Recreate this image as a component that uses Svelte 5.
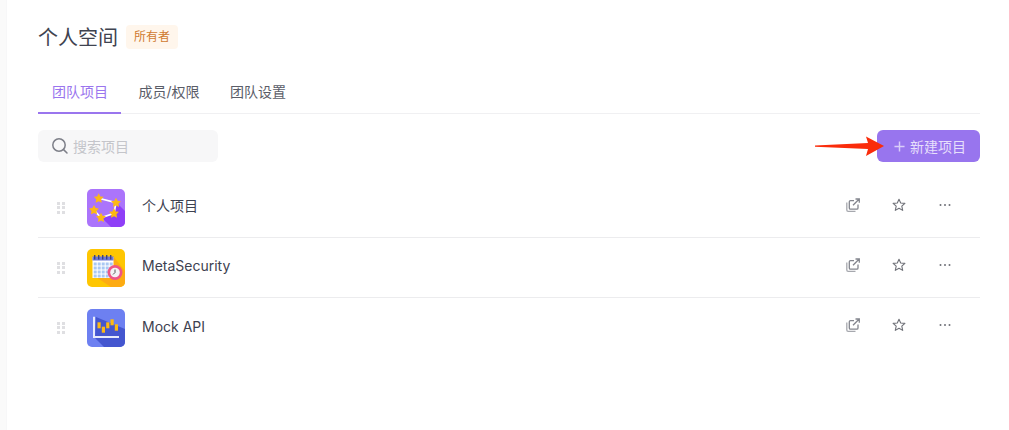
<script lang="ts">
  const tabs = ['团队项目', '成员/权限', '团队设置'];
  const projects = [
    { name: '个人项目', icon: 'star' },
    { name: 'MetaSecurity', icon: 'calendar' },
    { name: 'Mock API', icon: 'chart' }
  ];
  const starPoints = [
    [11.7, 9.3],
    [29, 13.7],
    [7, 21],
    [14, 28.7],
    [27, 24.3]
  ];
  const star = 'M0-3.4 1.100-1.300 3.400-1 1.700.7 2.100 3 0 2-2.100 3-1.700.7-3.400-1-1.100-1.300Z';
  const bars = [
    [10.5, 13.300, 6],
    [14.8, 17.700, 6],
    [19.200, 13.300, 6],
    [23.500, 10.300, 6],
    [27.800, 15.300, 6.400]
  ];
</script>

<div class="page">
  <main class="content">
    <header class="title-row">
      <h1>个人空间</h1>
      <span class="role">所有者</span>
    </header>

    <nav class="tabs">
      {#each tabs as tab, i}
        <button class="tab" class:active={i === 0}>{tab}</button>
      {/each}
    </nav>

    <div class="toolbar">
      <label class="search">
        <svg width="18" height="18" viewBox="0 0 18 18" fill="none" stroke="#7d7f88" stroke-width="1.5">
          <circle cx="8" cy="8" r="6.2" />
          <path d="M12.6 12.6 16 16" stroke-linecap="round" />
        </svg>
        <input placeholder="搜索项目" />
      </label>

      <div class="create-wrap">
        <button class="create">
          <svg width="11" height="11" viewBox="0 0 12 12" stroke="#d9cdf9" stroke-width="1.6">
            <path d="M6 .5v11M.5 6h11" />
          </svg>
          新建项目
        </button>
        <svg class="arrow" width="72" height="26" viewBox="0 0 72 26">
          <path d="M1 12.500 54 10 52 3.500 70 13 52 23 54 16 1 13.800Z" fill="#fa2c0b" />
        </svg>
      </div>
    </div>

    <ul class="list">
      {#each projects as project}
        <li class="row">
          <span class="grip">
            {#each Array(6) as _}<i></i>{/each}
          </span>

          <svg class="logo" width="38" height="38" viewBox="0 0 38 38">
            {#if project.icon === 'star'}
              <rect width="38" height="38" rx="5" fill="#ab74fb" />
              <path d="M29 13 27 25 14 28 24 38H33a5 5 0 0 0 5-5V22Z" fill="#8f3ff7" />
              <path d="M11.700 9.300 29 13.700 27 24.300 14 28.700 7 21" fill="none" stroke="#fff" stroke-width="1.700" />
              {#each starPoints as p}
                <path d={star} transform="translate({p[0]} {p[1]}) scale(1.450)" fill="#fdb913" />
              {/each}
            {:else if project.icon === 'calendar'}
              <rect width="38" height="38" rx="5" fill="#fec602" />
              <path d="M26 7 38 22V33a5 5 0 0 1-5 5H24L6 26Z" fill="#fdab12" />
              <rect x="5.500" y="8" width="21" height="21" fill="#fff" />
              <rect x="5.500" y="7.500" width="21" height="4" fill="#6d78d8" />
              {#each [7.500, 11.500, 15.500, 19.500, 23.500] as x}
                <rect x={x - 0.5} y="6" width="1.400" height="4.500" fill="#3c437f" />
                {#each [13.500, 17.500, 21.500, 25.500] as y}
                  <rect x={x - 0.8} {y} width="3" height="3" fill="#a9c8f4" />
                {/each}
              {/each}
              <circle cx="28" cy="23.500" r="7.500" fill="#ee5586" />
              <circle cx="28" cy="23.500" r="4.800" fill="#f3f3f5" />
              <path d="M28 23.500V20.500M28 23.500 26 25.500" stroke="#555" stroke-width="1" fill="none" />
            {:else}
              <rect width="38" height="38" rx="5" fill="#6d80f1" />
              <path d="M9 8 38 20V33a5 5 0 0 1-5 5H17L8 29Z" fill="#4456cf" />
              <path d="M7 7.700V28H32" fill="none" stroke="#e6eafb" stroke-width="2" />
              {#each bars as b}
                <rect x={b[0]} y={b[1]} width="3.200" height={b[2]} fill="#fdb913" />
              {/each}
            {/if}
          </svg>

          <span class="name">{project.name}</span>

          <div class="actions">
            <svg width="14" height="14" viewBox="0 0 14 14" fill="none" stroke="#84868e" stroke-width="1.300">
              <path d="M.8 4.500V12a1.300 1.300 0 0 0 1.300 1.300H9.500" stroke="#a6a8ae" />
              <path d="M8 2.600H4.500A1.200 1.200 0 0 0 3.300 3.800V10A1.200 1.200 0 0 0 4.500 11.200H10.800A1.200 1.200 0 0 0 12 10V6.500M7 7.300 13 1.300M9.500 1H13.300V4.800" />
            </svg>
            <svg width="14" height="14" viewBox="0 0 14 14" fill="none" stroke="#6f7178" stroke-width="1.100">
              <path d="M7 1.200 8.700 5 12.900 5.400 9.800 8.200 10.700 12.400 7 10.200 3.300 12.400 4.200 8.200 1.100 5.400 5.300 5Z" stroke-linejoin="round" />
            </svg>
            <svg class="more" width="12" height="4" viewBox="0 0 12 4" fill="#6f7178">
              <circle cx="1.500" cy="2" r="1" /><circle cx="6" cy="2" r="1" /><circle cx="10.500" cy="2" r="1" />
            </svg>
          </div>
        </li>
      {/each}
    </ul>
  </main>
</div>

<style>
  :global(body) {
    margin: 0;
    background: #fff;
  }

  .page {
    height: 430px;
    box-sizing: border-box;
    margin-left: 6px;
    border-left: 1px solid #f7f7f8;
    box-shadow: -6px 0 0 #fafafa;
    padding: 0 29px 0 31px;
    font-family: Inter, "Noto Sans CJK SC", "Liberation Sans", sans-serif;
    color: #3d4150;
  }

  .title-row {
    display: flex;
    align-items: center;
    gap: 8px;
    height: 72px;
    padding-top: 1px;
  }

  h1 {
    margin: 0 0 2px;
    font-size: 20px;
    font-weight: 400;
    color: #3f4350;
  }

  .role {
    padding: 0 8px;
    height: 24px;
    line-height: 24px;
    border-radius: 4px;
    background: #fff6ec;
    color: #d07a30;
    font-size: 12px;
  }

  .tabs {
    display: flex;
    gap: 3.5px;
    height: 40px;
    border-bottom: 1px solid #f0f0f2;
  }

  .tab {
    padding: 0 13px 3px 14px;
    border: 0;
    border-bottom: 2px solid transparent;
    background: none;
    font: inherit;
    font-size: 14px;
    color: #5a5d68;
    height: 41px;
  }

  .tab.active {
    color: #9a75ee;
    border-bottom-color: #9a75ee;
  }

  .toolbar {
    display: flex;
    justify-content: space-between;
    margin-top: 16px;
  }

  .search {
    display: flex;
    align-items: center;
    gap: 4px;
    width: 180px;
    height: 32px;
    box-sizing: border-box;
    padding-left: 13px;
    border-radius: 6px;
    background: #f7f7f8;
  }

  .search input {
    width: 120px;
    padding: 0;
    border: 0;
    outline: 0;
    background: none;
    font: inherit;
    font-size: 14px;
  }

  .search input::placeholder {
    color: #c4c5ca;
  }

  .create-wrap {
    position: relative;
  }

  .create {
    display: flex;
    align-items: center;
    gap: 5px;
    width: 103px;
    height: 32px;
    padding: 0 0 0 17px;
    border: 0;
    border-radius: 6px;
    background: #9875ee;
    font: inherit;
    font-size: 14px;
    color: #e6dffb;
  }

  .arrow {
    position: absolute;
    left: -63px;
    top: 3px;
  }

  .list {
    margin: 16px 0 0;
    padding: 0;
    list-style: none;
  }

  .row {
    display: flex;
    align-items: center;
    height: 59px;
    border-bottom: 1px solid #ececee;
  }

  .row:last-child {
    border-bottom: 0;
  }

  .row:last-child .name {
    margin-bottom: 3px;
  }

  .grip {
    display: grid;
    grid-template-columns: 3px 3px;
    gap: 1.500px 2px;
    margin: 0 22px 0 19px;
  }

  .grip i {
    width: 3px;
    height: 3px;
    background: #dfdfe2;
  }

  .logo {
    flex: none;
  }

  .name {
    flex: 1;
    margin: 0 0 5px 17px;
    font-size: 14px;
    color: #3d4150;
  }

  .actions {
    display: flex;
    align-items: center;
    gap: 32px;
    margin: 0 29px 6px 0;
  }

  .more {
    margin-left: 1px;
  }
</style>
